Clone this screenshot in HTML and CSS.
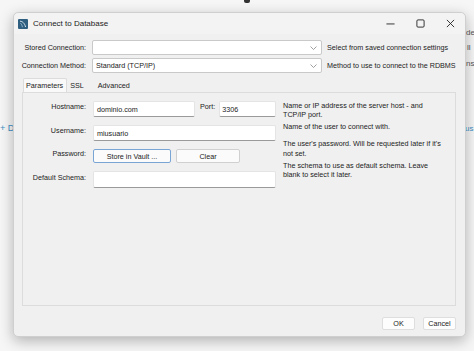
FILE: index.html
```html
<!DOCTYPE html>
<html>
<head>
<meta charset="utf-8">
<link rel="stylesheet" href="styles.css">
</head>
<body>
<div class="desk">
  <span class="bg-frag bg-de">de</span>
  <span class="bg-frag bg-ll">ll</span>
  <span class="bg-frag bg-ns">ns</span>
  <span class="bg-frag bg-d">+ D</span>
  <span class="bg-frag bg-us">us</span>
  <span class="bg-blob"></span>

  <div class="window">
    <div class="titlebar">
      <svg class="app-icon" width="10" height="10" viewBox="0 0 10 10">
        <rect width="10" height="10" rx="1" fill="#2f5f80"/>
        <path d="M2 2.2 C4.5 2.4 6.5 4 7.6 8" stroke="#d8e6ef" stroke-width="1" fill="none"/>
        <path d="M2.3 4 C3.5 5 4.2 6.5 4.4 8.2" stroke="#9fc0d6" stroke-width="0.8" fill="none"/>
      </svg>
      <span class="title">Connect to Database</span>
      <div class="controls">
        <span class="ctl"><svg width="10" height="10" viewBox="0 0 10 10"><path d="M0.5 5.5 H9.5" stroke="#222" stroke-width="1"/></svg></span>
        <span class="ctl"><svg width="10" height="10" viewBox="0 0 10 10"><rect x="1" y="1" width="8" height="8" rx="1.2" stroke="#222" stroke-width="1" fill="none"/></svg></span>
        <span class="ctl"><svg width="10" height="10" viewBox="0 0 10 10"><path d="M1 1 L9 9 M9 1 L1 9" stroke="#222" stroke-width="1"/></svg></span>
      </div>
    </div>

    <div class="top-form">
      <label class="lbl">Stored Connection:</label>
      <div class="combo"><span class="combo-val"></span><span class="chev"><svg width="7" height="4" viewBox="0 0 7 4"><path d="M0.5 0.5 L3.5 3.5 L6.5 0.5" stroke="#888" stroke-width="0.8" fill="none"/></svg></span></div>
      <span class="desc">Select from saved connection settings</span>

      <label class="lbl">Connection Method:</label>
      <div class="combo"><span class="combo-val">Standard (TCP/IP)</span><span class="chev"><svg width="7" height="4" viewBox="0 0 7 4"><path d="M0.5 0.5 L3.5 3.5 L6.5 0.5" stroke="#888" stroke-width="0.8" fill="none"/></svg></span></div>
      <span class="desc">Method to use to connect to the RDBMS</span>
    </div>

    <div class="tabs">
      <span class="tab active">Parameters</span>
      <span class="tab ssl">SSL</span>
      <span class="tab">Advanced</span>
    </div>

    <div class="pane">
      <div class="grid">
        <label class="lbl">Hostname:</label>
        <div class="host-row">
          <div class="input host">dominio.com</div>
          <label class="lbl port-lbl">Port:</label>
          <div class="input port">3306</div>
        </div>

        <label class="lbl">Username:</label>
        <div class="input">miusuario</div>

        <label class="lbl">Password:</label>
        <div class="btn-row">
          <button class="btn vault">Store in Vault ...</button>
          <button class="btn clear">Clear</button>
        </div>

        <label class="lbl">Default Schema:</label>
        <div class="input schema"></div>
      </div>
      <div class="helps">
        <div class="help h1">Name or IP address of the server host - and<br>TCP/IP port.</div>
        <div class="help h2">Name of the user to connect with.</div>
        <div class="help h3">The user's password. Will be requested later if it's<br>not set.</div>
        <div class="help h4">The schema to use as default schema. Leave<br>blank to select it later.</div>
      </div>
    </div>

    <div class="footer">
      <button class="btn foot">OK</button>
      <button class="btn foot">Cancel</button>
    </div>
  </div>
</div>
</body>
</html>
```

FILE: styles.css
```css
* { box-sizing: border-box; }
html, body { margin: 0; padding: 0; }
body {
  width: 474px;
  height: 351px;
  overflow: hidden;
  background: #f6f6f6;
  font-family: "Liberation Sans", Arial, sans-serif;
  font-size: 7.2px;
  color: #222;
}
.desk {
  position: relative;
  width: 474px;
  height: 351px;
  padding: 12px 0 0 13px;
}
.bg-frag {
  position: absolute;
  font-size: 8px;
  color: #555;
}
.bg-de { left: 466px; top: 28px; }
.bg-ll { left: 467px; top: 43px; }
.bg-ns { left: 466px; top: 59px; }
.bg-d { left: 0; top: 123px; color: #3b8fc4; font-size: 9px; }
.bg-us { left: 465px; top: 124px; color: #3b8fc4; font-size: 8px; }
.bg-blob {
  position: absolute;
  left: 244px; top: -2px;
  width: 6px; height: 5px;
  background: #333;
  border-radius: 2px;
}

.window {
  position: relative;
  width: 453px;
  height: 325px;
  background: #f0f0f0;
  border: 1px solid #cfcfcf;
  border-radius: 5px;
  box-shadow: 0 4px 14px rgba(0,0,0,0.28);
  display: flex;
  flex-direction: column;
}
.titlebar {
  height: 21px;
  display: flex;
  align-items: center;
  padding-left: 4px;
  background: #f3f3f3;
  border-radius: 5px 5px 0 0;
}
.app-icon { flex: none; }
.title {
  margin-left: 5px;
  font-size: 8px;
  color: #222;
}
.controls {
  margin-left: auto;
  display: flex;
  height: 100%;
}
.ctl {
  width: 30px;
  display: flex;
  align-items: center;
  justify-content: center;
}
.ctl svg { width: 9px; height: 9px; }

.top-form {
  display: grid;
  grid-template-columns: 72px 230px 1fr;
  column-gap: 6px;
  row-gap: 3px;
  align-items: center;
  padding: 6px 0 0 0;
}
.lbl {
  text-align: right;
  white-space: nowrap;
}
.combo {
  height: 15px;
  background: #fff;
  border: 1px solid #c9c9c9;
  border-radius: 2px;
  display: flex;
  align-items: center;
  padding: 0 4px 0 3px;
}
.combo-val { flex: 1; }
.chev { display: flex; }
.desc { white-space: nowrap; margin-left: -1px; }

.tabs {
  display: flex;
  margin: 5px 0 0 9px;
  height: 14px;
  align-items: stretch;
}
.tab {
  display: flex;
  align-items: center;
  padding: 0 4px;
}
.tab.active {
  background: #f9f9f9;
  border: 1px solid #dcdcdc;
  border-bottom: none;
  padding: 0 3px 0 2px;
  border-radius: 2px 2px 0 0;
}
.tab.ssl { padding: 0 10px 0 3px; }

.pane {
  margin: 0 9px 0 8px;
  height: 214px;
  border: 1px solid #dcdcdc;
  background: #f0f0f0;
  padding-top: 8px;
  display: flex;
  gap: 7px;
}
.grid {
  flex: none;
  display: grid;
  grid-template-columns: 63px 183px;
  grid-template-rows: 24px 23px 24px 17px;
  column-gap: 7px;
  align-items: start;
}
.grid .lbl {
  line-height: 11px;
}
.input {
  height: 16px;
  background: #fff;
  border: 1px solid #e4e4e4;
  border-bottom: 1px solid #9a9a9a;
  border-radius: 2px;
  padding: 0 3px;
  display: flex;
  align-items: center;
}
.input.schema { height: 17px; margin-top: -1px; }
.host-row {
  display: flex;
  align-items: flex-start;
}
.input.host { width: 102px; }
.port-lbl { margin: 0 4px 0 5px; }
.input.port { flex: 1; padding-left: 2px; }

.btn-row {
  display: flex;
  gap: 5px;
  padding-top: 1px;
}
.btn {
  font-family: inherit;
  font-size: 7.2px;
  color: #222;
  background: #fbfbfb;
  border: 1px solid #d0d0d0;
  border-radius: 2px;
  height: 14px;
  padding: 0;
}
.btn.vault { width: 78px; border-color: #7aa6d6; }
.btn.clear { width: 64px; }

.helps {
  flex: 1;
}
.help {
  line-height: 9.4px;
  white-space: nowrap;
}
.h2 { margin-top: 2px; }
.h3 { margin-top: 8px; }
.h4 { margin-top: 3px; }

.footer {
  display: flex;
  justify-content: flex-end;
  gap: 8px;
  padding: 11px 9px 0 0;
}
.btn.foot {
  width: 33px;
  height: 13px;
  background: #fdfdfd;
  border-color: #dedede;
}
```
